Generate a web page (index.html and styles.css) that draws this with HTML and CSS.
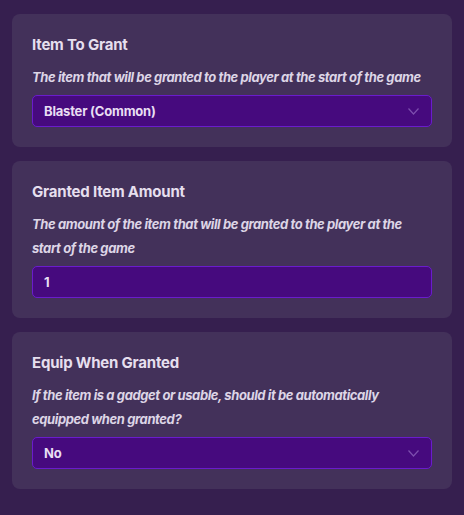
FILE: index.html
```html
<!DOCTYPE html>
<html lang="en">
<head>
<meta charset="utf-8">
<title>Item Granter Settings</title>
<link rel="stylesheet" href="styles.css">
</head>
<body>
<div class="panel">
  <section class="card">
    <h2 class="title">Item To Grant</h2>
    <p class="desc">The item that will be granted to the player at the start of the game</p>
    <div class="field select">
      <span class="value">Blaster (Common)</span>
      <svg class="chev" width="11" height="7" viewBox="0 0 11 7"><path d="M0.5 0.5 L5.5 6 L10.5 0.5" fill="none" stroke="#7d4fae" stroke-width="1.2"/></svg>
    </div>
  </section>
  <section class="card">
    <h2 class="title">Granted Item Amount</h2>
    <p class="desc">The amount of the item that will be granted to the player at the start of the game</p>
    <div class="field">
      <span class="value">1</span>
    </div>
  </section>
  <section class="card">
    <h2 class="title">Equip When Granted</h2>
    <p class="desc">If the item is a gadget or usable, should it be automatically equipped when granted?</p>
    <div class="field select">
      <span class="value">No</span>
      <svg class="chev" width="11" height="7" viewBox="0 0 11 7"><path d="M0.5 0.5 L5.5 6 L10.5 0.5" fill="none" stroke="#7d4fae" stroke-width="1.2"/></svg>
    </div>
  </section>
</div>
</body>
</html>
```

FILE: styles.css
```css
html, body {
  margin: 0;
  padding: 0;
  background: #361f4f;
}
body {
  font-family: Inter, "Noto Sans", sans-serif;
  width: 464px;
  height: 515px;
  overflow: hidden;
}
.panel {
  display: flex;
  flex-direction: column;
  gap: 14px;
  padding: 14px 12px;
}
.card {
  background: #43315a;
  border-radius: 8px;
  padding: 20px 20px 20px 20px;
  display: flex;
  flex-direction: column;
}
.title {
  margin: 0;
  font-size: 15px;
  font-weight: 700;
  line-height: 22px;
  color: #e6dfee;
  letter-spacing: -0.2px;
}
.desc {
  margin: 9px 0 6px;
  max-width: 395px;
  font-size: 13px;
  font-style: italic;
  font-weight: 700;
  line-height: 24px;
  color: #ddd5e6;
  letter-spacing: -0.4px;
}
.field {
  height: 32px;
  box-sizing: border-box;
  background: #460a7e;
  border: 1.5px solid #6a1ccc;
  border-radius: 5px;
  display: flex;
  align-items: center;
  justify-content: space-between;
  padding: 0 11px 0 11px;
}
.value {
  font-size: 13px;
  font-weight: 700;
  color: #e8def3;
  letter-spacing: -0.2px;
}
.chev {
  display: block;
  margin-right: 1px;
}
```
